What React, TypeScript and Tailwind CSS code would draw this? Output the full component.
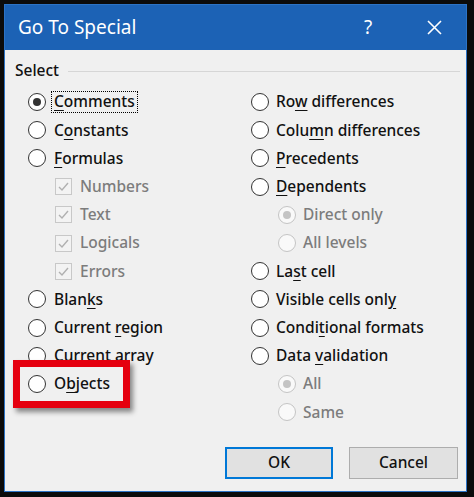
import React from "react";

type Label = [string, string, string];

const font = { fontFamily: '"Noto Sans", "Open Sans", Arial, sans-serif' };

const Text = ({ label, disabled }: { label: Label; disabled?: boolean }) => (
    <span className={disabled ? "text-[#7c7c7c]" : "text-[#111111]"}>
        {label[0]}
        {label[1] && <span className="underline underline-offset-[3px]">{label[1]}</span>}
        {label[2]}
    </span>
);

const Radio = ({ checked, disabled }: { checked?: boolean; disabled?: boolean }) => (
    <span
        className={
            "flex h-[18px] w-[18px] shrink-0 items-center justify-center rounded-full border-[1.5px] " +
            (disabled ? "border-[#c4c4c4] bg-[#f9f9f9]" : "border-[#333333] bg-white")
        }
    >
        {checked && (
            <span
                className={
                    "h-[8px] w-[8px] rounded-full " + (disabled ? "bg-[#c4c4c4]" : "bg-[#333333]")
                }
            />
        )}
    </span>
);

const Check = () => (
    <span className="flex h-[17px] w-[17px] shrink-0 items-center justify-center border border-[#c8c8c8] bg-[#f3f3f3]">
        <svg width="13" height="13" viewBox="0 0 13 13">
            <polyline points="2,7 5,10 11,3" fill="none" stroke="#b0b0b0" strokeWidth="1.4" />
        </svg>
    </span>
);

const Row = ({ children }: { children: React.ReactNode }) => (
    <div className="flex h-[28.2px] items-center">{children}</div>
);

const left: { kind: "radio" | "check"; label: Label; checked?: boolean; focus?: boolean }[] = [
    { kind: "radio", label: ["", "C", "omments"], checked: true, focus: true },
    { kind: "radio", label: ["C", "o", "nstants"] },
    { kind: "radio", label: ["", "F", "ormulas"] },
    { kind: "check", label: ["Numbers", "", ""] },
    { kind: "check", label: ["Text", "", ""] },
    { kind: "check", label: ["Logicals", "", ""] },
    { kind: "check", label: ["Errors", "", ""] },
    { kind: "radio", label: ["Blan", "k", "s"] },
    { kind: "radio", label: ["Current ", "r", "egion"] },
    { kind: "radio", label: ["Current array", "", ""] },
    { kind: "radio", label: ["O", "b", "jects"] },
];

const right: { label: Label; sub?: boolean; checked?: boolean }[] = [
    { label: ["Ro", "w", " differences"] },
    { label: ["Colu", "m", "n differences"] },
    { label: ["", "P", "recedents"] },
    { label: ["", "D", "ependents"] },
    { label: ["Direct only", "", ""], sub: true, checked: true },
    { label: ["All levels", "", ""], sub: true },
    { label: ["La", "s", "t cell"] },
    { label: ["Visible cells onl", "y", ""] },
    { label: ["Condi", "t", "ional formats"] },
    { label: ["Data ", "v", "alidation"] },
    { label: ["All", "", ""], sub: true, checked: true },
    { label: ["Same", "", ""], sub: true },
];

const App = () => {
    return (
        <div className="relative h-[497px] w-[474px] bg-[#0b0b0b] pl-[4px] pt-[4px]" style={font}>
            <div className="flex h-[488px] w-[463px] flex-col border border-[#2c73c6] bg-[#f0f0f0]">
                <div className="flex h-[45px] items-center bg-[#1c62b5] pl-[13px] text-white">
                    <span className="text-[19px]">Go To Special</span>
                    <span className="ml-auto w-[14px] text-center text-[19px]">?</span>
                    <svg className="ml-[52px] mr-[24px]" width="15" height="15" viewBox="0 0 15 15">
                        <path d="M1 1 L14 14 M14 1 L1 14" stroke="white" strokeWidth="1.6" />
                    </svg>
                </div>

                <div className="mt-[11px] flex h-[20px] items-center pl-[10px] pr-[6px] text-[15.5px] font-medium text-[#111111]">
                    <span>Select</span>
                    <div className="ml-[9px] h-px flex-1 bg-[#d6d6d6]" />
                </div>

                <div className="mt-[7px] grid grid-cols-[223px_1fr] pl-[23px] text-[15.5px] font-medium">
                    <div className="flex flex-col">
                        {left.map((item, i) => (
                            <Row key={i}>
                                {item.kind === "radio" ? (
                                    <>
                                        <Radio checked={item.checked} />
                                        <span
                                            className={
                                                "ml-[5px] flex h-[22px] items-center px-[2px] " +
                                                (item.focus ? "border border-dotted border-black" : "border border-transparent")
                                            }
                                        >
                                            <Text label={item.label} />
                                        </span>
                                    </>
                                ) : (
                                    <div className="ml-[27px] flex items-center gap-[8px]">
                                        <Check />
                                        <Text label={item.label} disabled />
                                    </div>
                                )}
                            </Row>
                        ))}
                    </div>
                    <div className="flex flex-col">
                        {right.map((item, i) => (
                            <Row key={i}>
                                <div className={"flex items-center gap-[7px] " + (item.sub ? "ml-[27px]" : "")}>
                                    <Radio checked={item.checked} disabled={item.sub} />
                                    <Text label={item.label} disabled={item.sub} />
                                </div>
                            </Row>
                        ))}
                    </div>
                </div>

                <div className="mt-auto mb-[12px] flex justify-end gap-[16px] pr-[8px] text-[15.5px] font-medium text-[#111111]">
                    <button className="h-[32px] w-[108px] border-2 border-[#0078d7] bg-[#e1e1e1]">OK</button>
                    <button className="h-[32px] w-[109px] border border-[#adadad] bg-[#e1e1e1]">Cancel</button>
                </div>
            </div>

            <div className="absolute left-[13px] top-[360px] h-[48px] w-[117px] border-[7px] border-[#e5000f] shadow-[3px_4px_5px_rgba(0,0,0,0.45)]" />
        </div>
    );
};

export default App;
